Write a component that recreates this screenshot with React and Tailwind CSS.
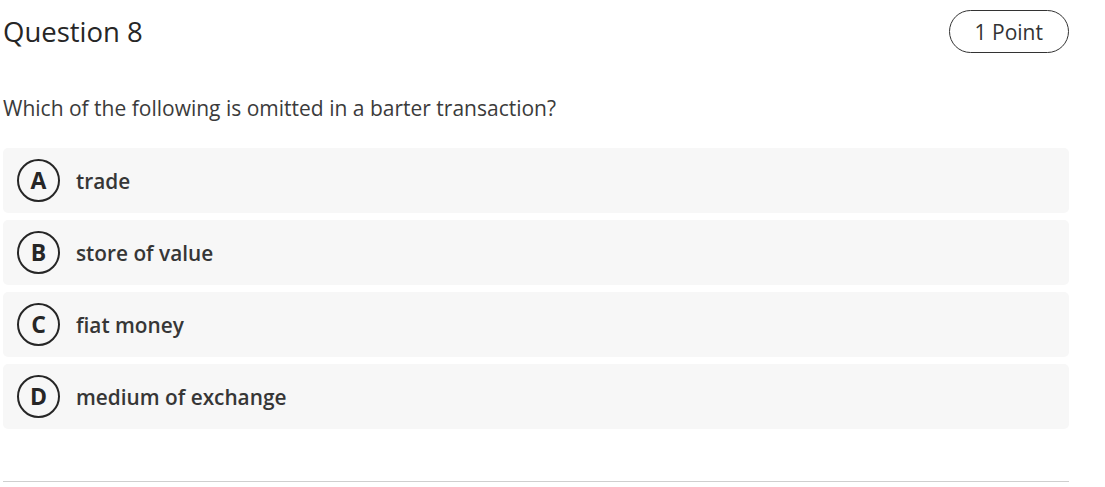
import React from 'react';

const options = [
  { letter: 'A', text: 'trade' },
  { letter: 'B', text: 'store of value' },
  { letter: 'C', text: 'fiat money' },
  { letter: 'D', text: 'medium of exchange' },
];

export default function App() {
  return (
    <div className="w-[1105px] h-[487px] bg-white font-['Open_Sans',sans-serif] overflow-hidden">
      <div className="w-[1066px] ml-[3px] pt-[10px]">
        {/* header */}
        <div className="flex items-center justify-between h-[43px]">
          <h2 className="text-[27.5px] leading-[36px] font-normal text-[#262626]">Question 8</h2>
          <span className="h-[43px] px-[25px] flex items-center rounded-full border border-[#333] text-[21px] leading-[28px] text-[#333]">
            1 Point
          </span>
        </div>

        <p className="mt-[41px] text-[21px] leading-[28px] text-[#3b3b3b]">
          Which of the following is omitted in a barter transaction?
        </p>

        <div className="mt-[26px] flex flex-col gap-[7px]">
          {options.map((opt) => (
            <div
              key={opt.letter}
              className="h-[65px] flex items-center pl-[14px] bg-[#f7f7f7] rounded-[5px]"
            >
              <span className="w-[43px] h-[43px] shrink-0 rounded-full border-[2.5px] border-[#262626] flex items-center justify-center text-[23px] leading-none font-bold text-[#262626]">
                {opt.letter}
              </span>
              <span className="ml-[16px] text-[20.8px] leading-[28px] font-semibold text-[#363636]">{opt.text}</span>
            </div>
          ))}
        </div>

        <div className="mt-[52px] border-t-[1.5px] border-[#cfcfcf]" />
      </div>
    </div>
  );
}
